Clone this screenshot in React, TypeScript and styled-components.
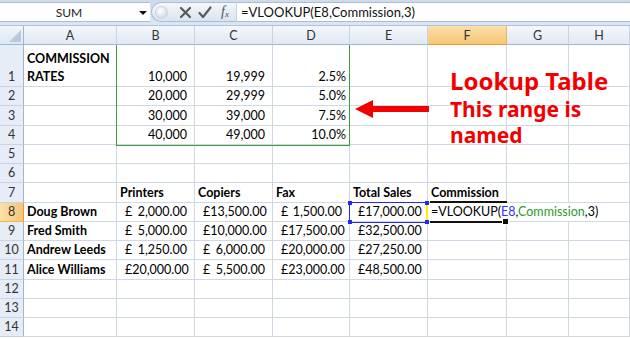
import * as React from 'react';
import styled, { createGlobalStyle } from 'styled-components';

type Kind = 'text' | 'num' | 'pct' | 'money' | 'formula';

interface CellData {
    col: number;
    kind: Kind;
    value: string;
    bold?: boolean;
    span?: number;
}

const COLS = ['A', 'B', 'C', 'D', 'E', 'F', 'G', 'H'];
const ROW_COUNT = 14;

const money = (col: number, value: string): CellData => ({ col, kind: 'money', value });

const DATA: Record<number, CellData[]> = {
    1: [
        { col: 0, kind: 'text', value: 'COMMISSION RATES', bold: true },
        { col: 1, kind: 'num', value: '10,000' },
        { col: 2, kind: 'num', value: '19,999' },
        { col: 3, kind: 'pct', value: '2.5%' },
    ],
    2: [
        { col: 1, kind: 'num', value: '20,000' },
        { col: 2, kind: 'num', value: '29,999' },
        { col: 3, kind: 'pct', value: '5.0%' },
    ],
    3: [
        { col: 1, kind: 'num', value: '30,000' },
        { col: 2, kind: 'num', value: '39,000' },
        { col: 3, kind: 'pct', value: '7.5%' },
    ],
    4: [
        { col: 1, kind: 'num', value: '40,000' },
        { col: 2, kind: 'num', value: '49,000' },
        { col: 3, kind: 'pct', value: '10.0%' },
    ],
    7: [
        { col: 1, kind: 'text', value: 'Printers', bold: true },
        { col: 2, kind: 'text', value: 'Copiers', bold: true },
        { col: 3, kind: 'text', value: 'Fax', bold: true },
        { col: 4, kind: 'text', value: 'Total Sales', bold: true },
        { col: 5, kind: 'text', value: 'Commission', bold: true },
    ],
    8: [
        { col: 0, kind: 'text', value: 'Doug Brown', bold: true },
        money(1, '2,000.00'),
        money(2, '13,500.00'),
        money(3, '1,500.00'),
        money(4, '17,000.00'),
        { col: 5, kind: 'formula', value: '', span: 3 },
    ],
    9: [
        { col: 0, kind: 'text', value: 'Fred Smith', bold: true },
        money(1, '5,000.00'),
        money(2, '10,000.00'),
        money(3, '17,500.00'),
        money(4, '32,500.00'),
    ],
    10: [
        { col: 0, kind: 'text', value: 'Andrew Leeds', bold: true },
        money(1, '1,250.00'),
        money(2, '6,000.00'),
        money(3, '20,000.00'),
        money(4, '27,250.00'),
    ],
    11: [
        { col: 0, kind: 'text', value: 'Alice Williams', bold: true },
        money(1, '20,000.00'),
        money(2, '5,500.00'),
        money(3, '23,000.00'),
        money(4, '48,500.00'),
    ],
};

const App: React.FC = () => {
    const cells: React.ReactNode[] = [];

    for (let r = 1; r <= ROW_COUNT; r++) {
        const rowData = DATA[r] || [];
        cells.push(
            <RowHeader key={`rh${r}`} $row={r + 1} $active={r === 8}>
                {r}
            </RowHeader>
        );
        let skip = 0;
        COLS.forEach((_, c) => {
            if (skip > 0) {
                skip--;
                return;
            }
            const d = rowData.find((x) => x.col === c);
            const span = d?.span || 1;
            skip = span - 1;
            cells.push(
                <Cell
                    key={`c${r}-${c}`}
                    $row={r + 1}
                    $col={c + 2}
                    $span={span}
                    $kind={d?.kind || 'text'}
                    $bold={!!d?.bold}
                >
                    {d && renderValue(d)}
                </Cell>
            );
        });
    }

    return (
        <Page>
            <GlobalStyle />
            <FormulaBar>
                <NameBox>
                    <span>SUM</span>
                    <DropArrow />
                </NameBox>
                <ButtonPill>
                    <Knob />
                    <BarIcon>
                        <svg width="13" height="13" viewBox="0 0 13 13">
                            <path d="M2 2 L11 11 M11 2 L2 11" stroke="#5a5a5a" strokeWidth="2.2" strokeLinecap="round" />
                        </svg>
                    </BarIcon>
                    <BarIcon>
                        <svg width="14" height="13" viewBox="0 0 14 13">
                            <path d="M1.5 7 L5 11 L12.5 1.5" stroke="#5a5a5a" strokeWidth="2.2" fill="none" strokeLinecap="round" strokeLinejoin="round" />
                        </svg>
                    </BarIcon>
                    <FxLabel>
                        f<sub>x</sub>
                    </FxLabel>
                </ButtonPill>
                <FormulaInput>=VLOOKUP(E8,Commission,3)</FormulaInput>
            </FormulaBar>

            <Sheet>
                <Corner>
                    <svg width="12" height="12" viewBox="0 0 12 12">
                        <polygon points="12,0 12,12 0,12" fill="#b9c9dc" />
                    </svg>
                </Corner>
                {COLS.map((c, i) => (
                    <ColHeader key={c} $col={i + 2} $active={c === 'F'}>
                        {c}
                    </ColHeader>
                ))}
                {cells}

                <RangeOutline />
                <RefBox>
                    <Handle $top $left />
                    <Handle $left />
                    <Handle $top />
                    <Handle />
                </RefBox>
                <ActiveCell>
                    <FillHandle />
                </ActiveCell>

                <Annotation>
                    <Arrow width="74" height="18" viewBox="0 0 74 18">
                        <polygon points="0,9 18,0 18,6 74,6 74,12 18,12 18,18" fill="#f20000" />
                    </Arrow>
                    <Callout>
                        <CalloutTitle>Lookup Table</CalloutTitle>
                        <CalloutText>This range is</CalloutText>
                        <CalloutText>named</CalloutText>
                    </Callout>
                </Annotation>
            </Sheet>
        </Page>
    );
};

function renderValue(d: CellData) {
    if (d.kind === 'money') {
        return (
            <>
                <span>£</span>
                <span>{d.value}</span>
            </>
        );
    }
    if (d.kind === 'formula') {
        return (
            <span>
                =VLOOKUP(<Ref $color="#3333ff">E8</Ref>,<Ref $color="#2e9a2e">Commission</Ref>,3)
            </span>
        );
    }
    return <span>{d.value}</span>;
}

const GlobalStyle = createGlobalStyle`
    html, body {
        margin: 0;
        padding: 0;
        background: #fff;
    }
    body {
        font-family: Lato, "Liberation Sans", sans-serif;
        overflow: hidden;
    }
`;

const Page = styled.div`
    width: 630px;
    height: 339px;
    overflow: hidden;
    background: #fff;
`;

const FormulaBar = styled.div`
    display: flex;
    align-items: stretch;
    height: 20px;
    padding: 2px 0 3px 0;
    background: linear-gradient(#cddbed, #dce6f3);
    border-bottom: 1px solid #b1c3d9;
`;

const NameBox = styled.div`
    position: relative;
    width: 150px;
    background: #fff;
    display: flex;
    align-items: center;
    justify-content: center;
    font-size: 12px;
    color: #222;
    padding-right: 12px;
    box-sizing: border-box;
    border-top: 1px solid #a9bdd6;
    border-bottom: 1px solid #a9bdd6;
`;

const DropArrow = styled.span`
    position: absolute;
    right: 3px;
    top: 8px;
    border-left: 4px solid transparent;
    border-right: 4px solid transparent;
    border-top: 4px solid #111;
`;

const ButtonPill = styled.div`
    width: 86px;
    display: flex;
    align-items: center;
    gap: 5px;
    padding-left: 3px;
    box-sizing: border-box;
    border-radius: 11px 0 0 11px;
    background: linear-gradient(#f4f7fb, #dae4f0);
    border: 1px solid #a9bdd6;
    border-right: 1px solid #c3d1e2;
    margin-left: 1px;
`;

const Knob = styled.span`
    width: 11px;
    height: 11px;
    border-radius: 50%;
    background: radial-gradient(circle at 40% 35%, #ffffff, #c8ced6);
    border: 1px solid #c9d2de;
    margin-right: 6px;
`;

const BarIcon = styled.span`
    display: flex;
    align-items: center;
    width: 14px;
`;

const FxLabel = styled.span`
    font-family: "Liberation Serif", serif;
    font-style: italic;
    font-size: 14px;
    color: #555;
    margin-left: 4px;
    line-height: 1;

    sub {
        font-size: 9px;
        vertical-align: baseline;
        position: relative;
        top: 1px;
    }
`;

const FormulaInput = styled.div`
    flex: 1;
    background: #fff;
    border-top: 1px solid #a9bdd6;
    border-bottom: 1px solid #a9bdd6;
    display: flex;
    align-items: center;
    padding-left: 4px;
    font-family: Lato, "Liberation Sans", sans-serif;
    font-size: 13px;
    color: #111;
`;

const Sheet = styled.div`
    display: grid;
    grid-template-columns: 24px 93px 78px 78px 77px 78px 79px 62px 61px;
    grid-template-rows: 19px 42px repeat(13, 19.25px);
    font-size: 12.5px;
    color: #000;
`;

const headerBase = `
    display: flex;
    align-items: center;
    justify-content: center;
    font-size: 12.5px;
    color: #333;
    box-sizing: border-box;
`;

const Corner = styled.div`
    ${headerBase};
    grid-column: 1;
    grid-row: 1;
    background: linear-gradient(#f1f5fb, #dde7f3);
    border-right: 1px solid #9eb6ce;
    border-bottom: 1px solid #9eb6ce;
    justify-content: flex-end;
    align-items: flex-end;
    padding: 0 2px 2px 0;
`;

const ColHeader = styled.div<{ $col: number; $active: boolean }>`
    ${headerBase};
    grid-column: ${(p) => p.$col};
    grid-row: 1;
    background: ${(p) =>
        p.$active ? 'linear-gradient(#fbe0a8, #f6c677)' : 'linear-gradient(#f4f7fc, #e1e9f4)'};
    border-right: 1px solid ${(p) => (p.$active ? '#f2b25a' : '#c5d3e4')};
    border-bottom: 1px solid ${(p) => (p.$active ? '#f29536' : '#9eb6ce')};
`;

const RowHeader = styled.div<{ $row: number; $active: boolean }>`
    ${headerBase};
    grid-column: 1;
    grid-row: ${(p) => p.$row};
    align-items: flex-end;
    line-height: 18px;
    background: ${(p) => (p.$active ? 'linear-gradient(90deg, #fbe0a8, #f6c677)' : '#e6edf7')};
    border-right: 1px solid ${(p) => (p.$active ? '#f29536' : '#9eb6ce')};
    border-bottom: 1px solid ${(p) => (p.$active ? '#f2b25a' : '#c5d3e4')};
`;

const Cell = styled.div<{ $row: number; $col: number; $span: number; $kind: Kind; $bold: boolean }>`
    grid-row: ${(p) => p.$row};
    grid-column: ${(p) => p.$col} / span ${(p) => p.$span};
    box-sizing: border-box;
    border-right: 1px solid #d0d7e5;
    border-bottom: 1px solid #d0d7e5;
    display: flex;
    align-items: flex-end;
    justify-content: ${(p) =>
        p.$kind === 'num' || p.$kind === 'pct' ? 'flex-end' : p.$kind === 'money' ? 'space-between' : 'flex-start'};
    padding: ${(p) => (p.$kind === 'num' || p.$kind === 'money' ? '0 7px 0 8px' : '0 3px')};
    font-weight: ${(p) => (p.$bold ? 700 : 400)};
    line-height: 18px;
    white-space: ${(p) => (p.$kind === 'formula' ? 'nowrap' : 'normal')};
    overflow: hidden;
`;

const Ref = styled.span<{ $color: string }>`
    color: ${(p) => p.$color};
`;

const RangeOutline = styled.div`
    grid-column: 3 / 6;
    grid-row: 2 / 6;
    border: 1px solid #3aa03a;
    border-top: none;
    margin: 0 0 -1px -1px;
    pointer-events: none;
`;

const RefBox = styled.div`
    grid-column: 6;
    grid-row: 9;
    position: relative;
    border: 1px solid #2424ff;
    border-right: 2px solid #ffee00;
    margin: -1px 0 -1px -1px;
    pointer-events: none;
`;

const Handle = styled.span<{ $top?: boolean; $left?: boolean }>`
    position: absolute;
    width: 4px;
    height: 4px;
    background: #2424ff;
    ${(p) => (p.$top ? 'top: -2px;' : 'bottom: -2px;')}
    ${(p) => (p.$left ? 'left: -2px;' : 'right: -3px;')}
`;

const ActiveCell = styled.div`
    grid-column: 7;
    grid-row: 9;
    position: relative;
    border-top: 2px solid #111;
    border-bottom: 2px solid #111;
    margin: -2px 0 -1px 2px;
    pointer-events: none;
`;

const FillHandle = styled.span`
    position: absolute;
    right: -2px;
    bottom: -4px;
    width: 5px;
    height: 5px;
    background: #111;
    border: 1px solid #fff;
`;

const Annotation = styled.div`
    grid-column: 6 / 10;
    grid-row: 2 / 6;
    display: flex;
    align-items: flex-start;
    pointer-events: none;
`;

const Arrow = styled.svg`
    margin: 55px 0 0 5px;
    flex-shrink: 0;
`;

const Callout = styled.div`
    margin: 22px 0 0 21px;
    display: flex;
    flex-direction: column;
    color: #f20000;
    font-family: "Noto Sans", "Open Sans", sans-serif;
    font-weight: 700;
`;

const CalloutTitle = styled.div`
    font-size: 24px;
    line-height: 28px;
    margin-bottom: 1px;
`;

const CalloutText = styled.div`
    font-size: 21px;
    line-height: 26px;
`;

export default App;
